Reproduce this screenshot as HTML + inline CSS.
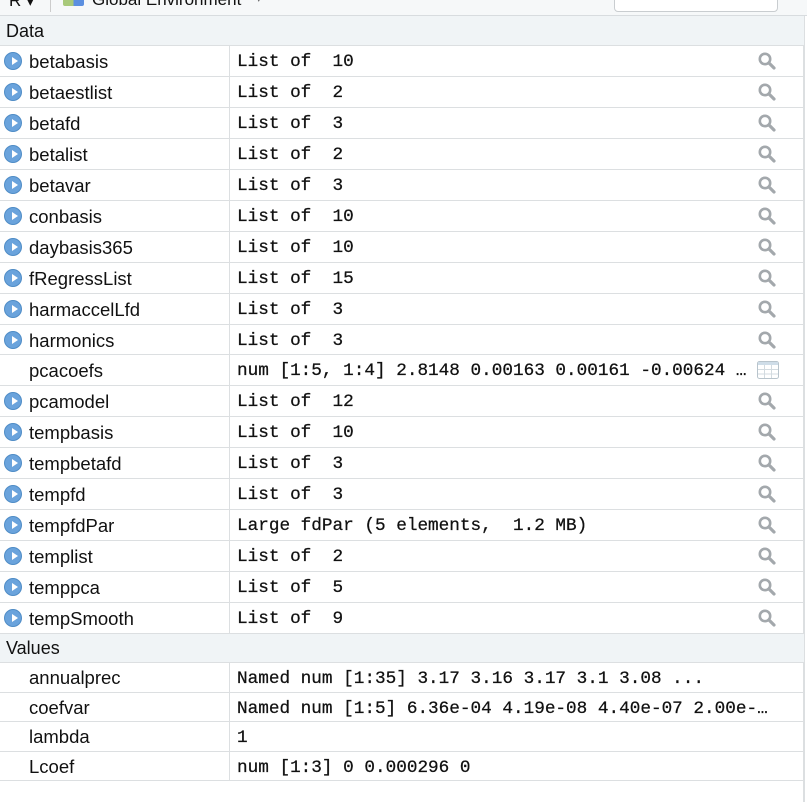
<!DOCTYPE html>
<html><head><meta charset="utf-8"><style>
*{margin:0;padding:0;box-sizing:border-box}
body{width:807px;height:802px;background:#fff;position:relative;overflow:hidden;font-family:"Liberation Sans",sans-serif;color:#111}
.tb{position:absolute;left:0;top:0;width:807px;height:16px;background:#f6f8f9;border-bottom:1px solid #d8dcdf}
.r{position:absolute;left:0;width:804px;border-bottom:1.5px solid #dcdfe1}
.h{background:#f0f4f6;font-size:18px}
.h span{position:absolute;left:6px}
.n{position:absolute;left:29px;font-size:18.5px}
.v{position:absolute;left:237px;font-family:"Liberation Mono",monospace;font-size:17.7px;white-space:pre;-webkit-text-stroke:0.25px #111}
.d{position:absolute;left:229px;top:0;bottom:0;border-left:1.5px solid #dcdfe1}
.ic{position:absolute;left:4px;width:18px;height:18px;border-radius:50%;background:#6aa3dc;border:1px solid #4f8cc6}
.ic:after{content:"";position:absolute;left:6.5px;top:4px;border-left:6px solid #fff;border-top:4px solid transparent;border-bottom:4px solid transparent}
.s{position:absolute;left:757px}
.vb{position:absolute;left:803px;top:16px;height:786px;border-left:2px solid #dcdfe1}
</style></head><body>
<div class="tb">
<div style="position:absolute;left:9px;top:-9px;font-size:17px">R ▾</div>
<div style="position:absolute;left:50px;top:0;height:12px;border-left:1px solid #ccc"></div>
<div style="position:absolute;left:63px;top:-4px;width:21px;height:10px;background:linear-gradient(90deg,#a8c97a 50%,#5b8fe0 50%);border-radius:2px"></div>
<div style="position:absolute;left:92px;top:-10px;font-size:17px">Global Environment</div>
<div style="position:absolute;left:256px;top:-8px;font-size:11px;color:#666">▾</div>
<div style="position:absolute;left:614px;top:-6px;width:164px;height:18px;border:1px solid #c9cdd0;border-radius:4px;background:#fff"></div>
</div>
<div class="vb"></div>
<div id="t"></div>
<script>
var data=[["betabasis","List of  10"],["betaestlist","List of  2"],["betafd","List of  3"],["betalist","List of  2"],["betavar","List of  3"],["conbasis","List of  10"],["daybasis365","List of  10"],["fRegressList","List of  15"],["harmaccelLfd","List of  3"],["harmonics","List of  3"],["pcacoefs","num [1:5, 1:4] 2.8148 0.00163 0.00161 -0.00624 …",1],["pcamodel","List of  12"],["tempbasis","List of  10"],["tempbetafd","List of  3"],["tempfd","List of  3"],["tempfdPar","Large fdPar (5 elements,  1.2 MB)"],["templist","List of  2"],["temppca","List of  5"],["tempSmooth","List of  9"]];
var vals=[["annualprec","Named num [1:35] 3.17 3.16 3.17 3.1 3.08 ..."],["coefvar","Named num [1:5] 6.36e-04 4.19e-08 4.40e-07 2.00e-…"],["lambda","1"],["Lcoef","num [1:3] 0 0.000296 0"]];
var mag='<svg width="20" height="20" viewBox="0 0 20 20"><circle cx="8" cy="8" r="5.2" fill="none" stroke="#a3a8ac" stroke-width="2.6"/><path d="M12 12l5 5" stroke="#a3a8ac" stroke-width="3.2" stroke-linecap="round"/></svg>';
var grid='<svg width="22" height="18" viewBox="0 0 22 18"><rect x="0.5" y="0.5" width="21" height="17" rx="2" fill="#fff" stroke="#b8c4cc"/><rect x="1" y="1" width="20" height="3" fill="#cfdde8"/><path d="M1 8.5h20M1 13h20M7.5 4v13M14.5 4v13" stroke="#d3dbe0"/></svg>';
var h='';var y=16;
h+='<div class="r h" style="top:'+y+'px;height:30px"><span style="top:5px">Data</span></div>';y=46;
var rh=30.95;
data.forEach(function(d){var t=Math.round(y);h+='<div class="r" style="top:'+t+'px;height:'+(Math.round(y+rh)-t)+'px"><div class="d"></div>'+(d[2]?'':'<div class="ic" style="top:6px"></div>')+'<div class="n" style="top:5px">'+d[0]+'</div><div class="v" style="top:6px">'+d[1]+'</div><div class="s" style="top:'+(d[2]?6:5)+'px">'+(d[2]?grid:mag)+'</div></div>';y+=rh;});
y=634;
h+='<div class="r h" style="top:634px;height:29px"><span style="top:4px">Values</span></div>';y=663;
vals.forEach(function(d){var t=Math.round(y);h+='<div class="r" style="top:'+t+'px;height:'+(Math.round(y+29.5)-t)+'px"><div class="d"></div><div class="n" style="top:4px">'+d[0]+'</div><div class="v" style="top:6px">'+d[1]+'</div></div>';y+=29.5;});
document.getElementById('t').innerHTML=h;
</script>
</body></html>
